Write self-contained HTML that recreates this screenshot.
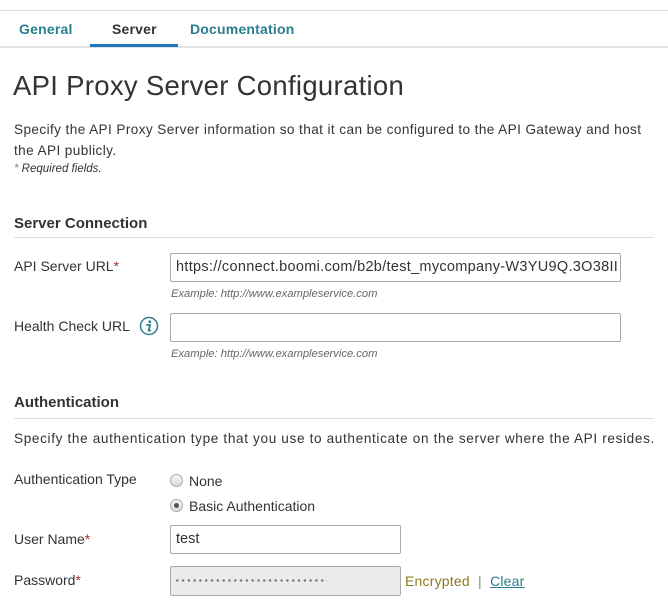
<!DOCTYPE html>
<html><head><meta charset="utf-8"><style>
*{margin:0;padding:0;box-sizing:border-box}
body{width:668px;height:603px;background:#fff;font-family:"Liberation Sans",sans-serif;color:#333;position:relative;overflow:hidden}
.a{position:absolute;white-space:nowrap}
.hr{position:absolute;height:1px;background:#ddd}
.tab{font-size:14px;color:#2a7d8f;font-weight:bold;letter-spacing:0.2px}
.lbl{font-size:14px;color:#333}
.req{color:#a33}
.inp{position:absolute;border:1px solid #aaa;border-radius:2px;background:#fff;font-size:14.5px;color:#333;padding:0 5px;line-height:27px;overflow:hidden;white-space:nowrap}
.ex{font-size:11.2px;font-style:italic;color:#666}
.h2{font-size:15px;font-weight:bold;color:#333}
.radio{position:absolute;width:13px;height:13px;border-radius:50%;border:1px solid #aaa;background:linear-gradient(#f4f4f4,#ddd)}
</style></head><body>
<div class="hr" style="left:0;top:10px;width:668px;background:#ddd"></div>
<div class="a tab" style="left:19px;top:21px">General</div>
<div class="a tab" style="left:112px;top:21px;color:#333">Server</div>
<div class="a tab" style="left:190px;top:21px">Documentation</div>
<div class="hr" style="left:0;top:46px;width:668px;height:2px;background:#e2e2e2"></div>
<div class="a" style="left:90px;top:44px;width:88px;height:3px;background:#1c78b8"></div>
<div class="a" style="left:13px;top:70px;font-size:27.5px;color:#333;letter-spacing:0.3px">API Proxy Server Configuration</div>
<div class="a" style="left:14px;top:119px;font-size:13.6px;line-height:21px;color:#333;letter-spacing:0.4px">Specify the API Proxy Server information so that it can be configured to the API Gateway and host<br>the API publicly.</div>
<div class="a" style="left:14px;top:163px;font-size:11.5px;font-style:italic;color:#333"><span style="color:#888">*</span> Required fields.</div>
<div class="a h2" style="left:14px;top:215px">Server Connection</div>
<div class="hr" style="left:14px;top:237px;width:640px"></div>
<div class="a lbl" style="left:14px;top:258px">API Server URL<span class="req">*</span></div>
<div class="inp" style="left:170px;top:253px;width:451px;height:29px;letter-spacing:0.3px">https://connect.boomi.com/b2b/test_mycompany-W3YU9Q.3O38II</div>
<div class="a ex" style="left:171px;top:288px">Example: http://www.exampleservice.com</div>
<div class="a lbl" style="left:14px;top:318px">Health Check URL</div>
<svg class="a" style="left:139px;top:316px" width="20" height="20" viewBox="0 0 20 20"><circle cx="10" cy="10" r="8.5" fill="#fff" stroke="#2a7d8f" stroke-width="1.5"/><circle cx="10.8" cy="5.8" r="1.4" fill="#2a7d8f"/><path d="M8 9h3l-1.3 5.5h1.6" fill="none" stroke="#2a7d8f" stroke-width="1.8" stroke-linecap="round"/></svg>
<div class="inp" style="left:170px;top:313px;width:451px;height:29px"></div>
<div class="a ex" style="left:171px;top:348px">Example: http://www.exampleservice.com</div>
<div class="a h2" style="left:14px;top:394px">Authentication</div>
<div class="hr" style="left:14px;top:418px;width:640px"></div>
<div class="a" style="left:14px;top:431px;font-size:13.6px;color:#333;letter-spacing:0.64px">Specify the authentication type that you use to authenticate on the server where the API resides.</div>
<div class="a lbl" style="left:14px;top:471px">Authentication Type</div>
<div class="radio" style="left:170px;top:474px"></div>
<div class="a lbl" style="left:189px;top:473px">None</div>
<div class="radio" style="left:170px;top:499px"><div style="position:absolute;left:3px;top:3px;width:5px;height:5px;border-radius:50%;background:#555"></div></div>
<div class="a lbl" style="left:189px;top:498px">Basic Authentication</div>
<div class="a lbl" style="left:14px;top:531px">User Name<span class="req">*</span></div>
<div class="inp" style="left:170px;top:525px;width:231px;height:29px">test</div>
<div class="a lbl" style="left:14px;top:572px">Password<span class="req">*</span></div>
<div class="inp" style="left:170px;top:566px;width:231px;height:30px;background:#ebebeb"></div>
<div class="a" style="left:176px;top:579px;width:151px;height:3px;background-image:radial-gradient(circle at 1.3px 1.5px,#777 1.1px,transparent 1.4px);background-size:5.8px 3px;background-repeat:repeat-x"></div>
<div class="a" style="left:405px;top:573px;font-size:14px;color:#8a7a1e;letter-spacing:0.2px">Encrypted <span style="color:#888">&nbsp;|&nbsp;</span> <span style="color:#2a7d8f;text-decoration:underline">Clear</span></div>
</body></html>
